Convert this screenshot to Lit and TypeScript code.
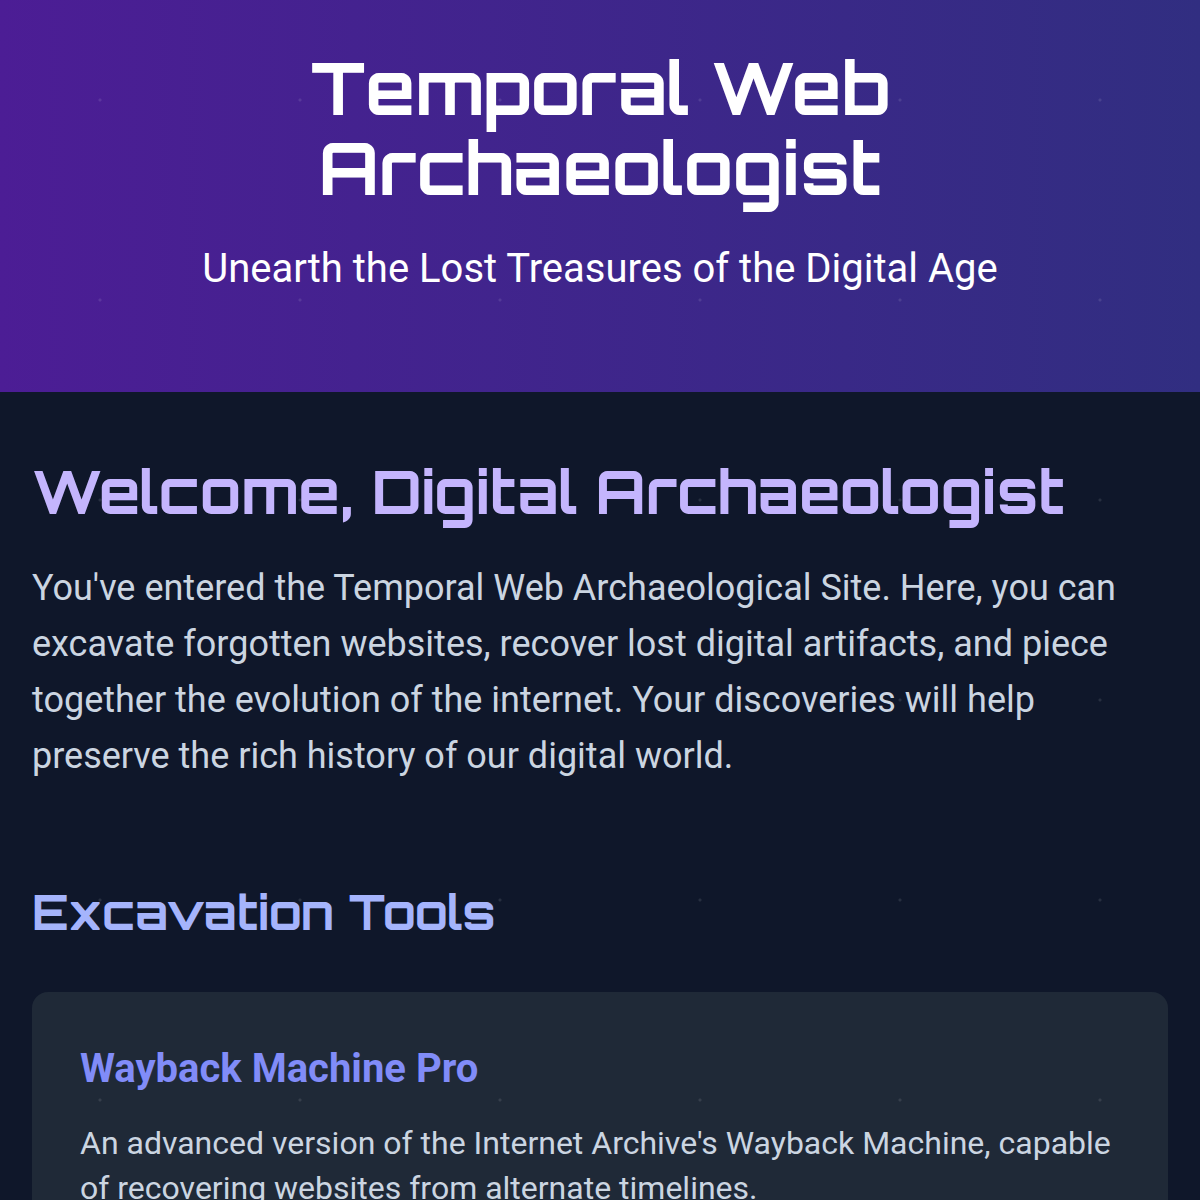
import { LitElement, html, css } from "lit";
import { customElement } from "lit/decorators.js";

@customElement("app-root")
export class AppRoot extends LitElement {
  static styles = css`
    :host { display: block; background: #0f172a; color: #cbd5e1; font-family: Roboto, "Liberation Sans", sans-serif; position: relative; overflow: hidden; height: 1200px; }
    .dots { position: absolute; inset: 0; pointer-events: none; background-image: radial-gradient(circle at center, rgba(255,255,255,0.1) 1px, transparent 2px); background-size: 200px 200px; }
    header { background: linear-gradient(90deg, #4c1d95, #312e81); padding: 47px 32px 95px; text-align: center; color: #fff; }
    h1, h2, h3 { font-family: Orbitron, "DejaVu Sans", sans-serif; font-weight: 700; margin: 0; }
    h1 { font-size: 72px; line-height: 80px; }
    .sub { font-size: 40px; line-height: 56px; margin: 34px 0 0; font-weight: 400; }
    main { padding: 63px 32px; }
    h2 { font-size: 60px; line-height: 72px; color: #c4b5fd; }
    .intro { font-size: 36px; line-height: 56px; margin: 33px 0 0; font-weight: 400; }
    h3 { font-size: 48px; line-height: 56px; color: #a5b4fc; margin-top: 100px; }
    .card { margin-top: 52px; background: #1f2937; border-radius: 16px; padding: 49px 48px 48px; }
    h4 { font-size: 40px; line-height: 56px; font-weight: 700; color: #818cf8; margin: 0; }
    .card p { font-size: 32px; line-height: 45px; margin: 24px 0 0; font-weight: 400; }
  `;
  render() {
    return html`
      <header>
        <h1>Temporal Web Archaeologist</h1>
        <p class="sub">Unearth the Lost Treasures of the Digital Age</p>
      </header>
      <main>
        <h2>Welcome, Digital Archaeologist</h2>
        <p class="intro">You've entered the Temporal Web Archaeological Site. Here, you can excavate forgotten websites, recover lost digital artifacts, and piece together the evolution of the internet. Your discoveries will help preserve the rich history of our digital world.</p>
        <h3>Excavation Tools</h3>
        <section class="card">
          <h4>Wayback Machine Pro</h4>
          <p>An advanced version of the Internet Archive's Wayback Machine, capable of recovering websites from alternate timelines.</p>
        </section>
      </main>
      <div class="dots"></div>
    `;
  }
}
